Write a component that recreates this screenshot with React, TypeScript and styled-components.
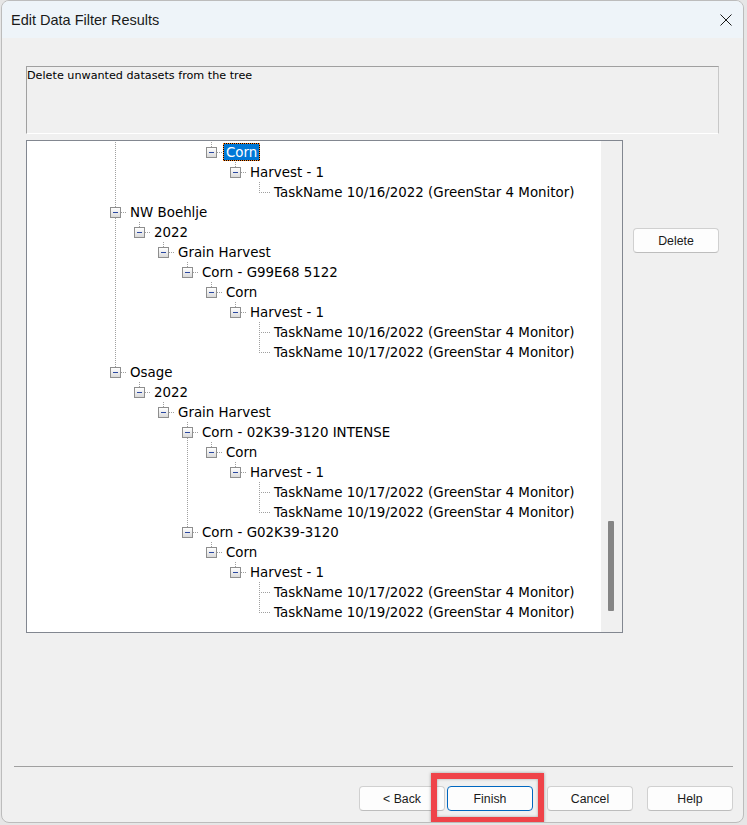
import React from "react";
import styled, { createGlobalStyle, css } from "styled-components";

const GlobalStyle = createGlobalStyle`
  html, body {
    margin: 0;
    padding: 0;
    background: #e6e6e6;
  }
  body {
    width: 747px;
    height: 825px;
    overflow: hidden;
  }
  #root {
    padding-left: 1px;
  }
`;

const UI_FONT = `"Liberation Sans", Arial, sans-serif`;
const TREE_FONT = `"DejaVu Sans", Verdana, sans-serif`;
const DOT = "#a0a0a0";

const Window = styled.div`
  width: 743px;
  height: 823px;
  box-sizing: border-box;
  border: 1px solid #bcbcbc;
  border-radius: 8px;
  overflow: hidden;
  background: #f0f0f0;
  display: flex;
  flex-direction: column;
  font-family: ${UI_FONT};
`;

const TitleBar = styled.div`
  flex: none;
  height: 37px;
  background: #eef4f9;
  display: flex;
  align-items: center;
  justify-content: space-between;
  padding: 0 11px 0 9px;
`;

const Title = styled.span`
  font-size: 14.5px;
  color: #1a1a1a;
`;

const CloseGlyph = styled.svg`
  display: block;
  width: 12px;
  height: 12px;
`;

const Body = styled.div`
  flex: 1;
  min-height: 0;
  display: flex;
  flex-direction: column;
  padding: 28px 24px 0;
`;

const Intro = styled.div`
  flex: none;
  height: 68px;
  box-sizing: border-box;
  border: 1px solid;
  border-color: #a0a0a0 #c8c8c8 #ffffff #a0a0a0;
  padding: 2px 0;
  font: 11.2px/13px ${TREE_FONT};
  color: #000;
`;

const Main = styled.div`
  flex: none;
  display: flex;
  gap: 10px;
  margin-top: 6px;
`;

const TreeBox = styled.div`
  width: 597px;
  height: 493px;
  box-sizing: border-box;
  border: 1px solid #828790;
  background: #fff;
  display: flex;
`;

const Viewport = styled.div`
  flex: 1;
  overflow: hidden;
  padding: 1px 0 0 4px;
`;

const Track = styled.div`
  flex: none;
  width: 21px;
  background: #f0f0f0;
  display: flex;
  flex-direction: column;
  padding-left: 7px;
  box-sizing: border-box;
`;

const Thumb = styled.div<{ $top: number; $height: number }>`
  width: 6px;
  margin-top: ${(p) => p.$top}px;
  height: ${(p) => p.$height}px;
  background: #858585;
  border-radius: 1px;
`;

const Side = styled.div`
  width: 86px;
  padding-top: 88px;
`;

const Spacer = styled.div`
  flex: 1;
`;

const Footer = styled.div`
  flex: none;
  padding: 0 10px 11px 12px;
`;

const Separator = styled.div`
  height: 1px;
  background: #a0a0a0;
`;

const ButtonRow = styled.div`
  margin-top: 19px;
  display: flex;
  justify-content: flex-end;
  gap: 14px;
`;

const NavGroup = styled.div`
  display: flex;
  gap: 2px;
`;

const Button = styled.button<{ $default?: boolean }>`
  width: 86px;
  height: 25px;
  box-sizing: border-box;
  padding: 0;
  border-radius: 4px;
  border: 1px solid #d0d0d0;
  border-bottom-color: #bdbdbd;
  background: #fdfdfd;
  font: 12.3px ${UI_FONT};
  color: #1a1a1a;
  ${(p) =>
    p.$default &&
    css`
      border-color: #0067c0;
    `}
`;

const Highlighted = styled.div`
  position: relative;
  display: flex;
`;

const Callout = styled.div`
  position: absolute;
  left: -16px;
  right: -11px;
  top: -13px;
  bottom: -12px;
  border: 6px solid #ef4349;
  box-shadow: 0 0 3px rgba(0, 0, 0, 0.35), inset 0 0 3px rgba(0, 0, 0, 0.3);
  pointer-events: none;
`;

/* ---------- tree ---------- */

const Row = styled.div`
  display: flex;
  height: 20px;
  white-space: nowrap;
`;

const Guide = styled.span<{ $line: boolean }>`
  flex: none;
  width: 24px;
  height: 20px;
  ${(p) =>
    p.$line &&
    css`
      background-image: linear-gradient(to bottom, ${DOT} 50%, transparent 50%);
      background-size: 1px 2px;
      background-repeat: repeat-y;
      background-position: 12px 0;
    `}
`;

const NodeCell = styled.span<{ $last: boolean }>`
  flex: none;
  position: relative;
  width: 24px;
  height: 20px;
  display: flex;
  align-items: flex-start;

  &::before {
    content: "";
    position: absolute;
    left: 12px;
    top: 0;
    width: 1px;
    height: ${(p) => (p.$last ? "11px" : "20px")};
    background-image: linear-gradient(to bottom, ${DOT} 50%, transparent 50%);
    background-size: 1px 2px;
  }

  &::after {
    content: "";
    position: absolute;
    left: 12px;
    top: 10px;
    width: 12px;
    height: 1px;
    background-image: linear-gradient(to right, ${DOT} 50%, transparent 50%);
    background-size: 2px 1px;
  }
`;

const Expander = styled.span`
  position: relative;
  z-index: 1;
  margin: 5px 0 0 7px;
  width: 11px;
  height: 11px;
  box-sizing: border-box;
  border: 1px solid #8e8e8e;
  background: linear-gradient(#ffffff, #d9d9d9);
  display: flex;
  align-items: center;
  justify-content: center;
`;

const Minus = styled.span`
  width: 5px;
  height: 1px;
  background: #2b48a0;
`;

const Label = styled.span<{ $selected?: boolean }>`
  margin-top: 1px;
  height: 18px;
  box-sizing: border-box;
  padding: 1px 2px 0;
  border: 1px solid transparent;
  font: 13.4px/16px ${TREE_FONT};
  color: #000;
  ${(p) =>
    p.$selected &&
    css`
      background: #0078d7;
      color: #fff;
      border-color: #000;
      outline: 1px dotted #ff8728;
      outline-offset: -1px;
    `}
`;

type Node = {
  depth: number;
  label: string;
  branch?: boolean;
  last?: boolean;
  lines?: number[];
  selected?: boolean;
};

const TASK16 = "TaskName 10/16/2022 (GreenStar 4 Monitor)";
const TASK17 = "TaskName 10/17/2022 (GreenStar 4 Monitor)";
const TASK19 = "TaskName 10/19/2022 (GreenStar 4 Monitor)";

const rows: Node[] = [
  { depth: 7, label: "Corn", branch: true, last: true, lines: [3], selected: true },
  { depth: 8, label: "Harvest - 1", branch: true, last: true, lines: [3] },
  { depth: 9, label: TASK16, last: true, lines: [3] },
  { depth: 3, label: "NW Boehlje", branch: true, last: false },
  { depth: 4, label: "2022", branch: true, last: true, lines: [3] },
  { depth: 5, label: "Grain Harvest", branch: true, last: true, lines: [3] },
  { depth: 6, label: "Corn - G99E68 5122", branch: true, last: true, lines: [3] },
  { depth: 7, label: "Corn", branch: true, last: true, lines: [3] },
  { depth: 8, label: "Harvest - 1", branch: true, last: true, lines: [3] },
  { depth: 9, label: TASK16, last: false, lines: [3] },
  { depth: 9, label: TASK17, last: true, lines: [3] },
  { depth: 3, label: "Osage", branch: true, last: true },
  { depth: 4, label: "2022", branch: true, last: true },
  { depth: 5, label: "Grain Harvest", branch: true, last: true },
  { depth: 6, label: "Corn - 02K39-3120 INTENSE", branch: true, last: false },
  { depth: 7, label: "Corn", branch: true, last: true, lines: [6] },
  { depth: 8, label: "Harvest - 1", branch: true, last: true, lines: [6] },
  { depth: 9, label: TASK17, last: false, lines: [6] },
  { depth: 9, label: TASK19, last: true, lines: [6] },
  { depth: 6, label: "Corn - G02K39-3120", branch: true, last: true },
  { depth: 7, label: "Corn", branch: true, last: true },
  { depth: 8, label: "Harvest - 1", branch: true, last: true },
  { depth: 9, label: TASK17, last: false },
  { depth: 9, label: TASK19, last: true },
];

function TreeRow({ node }: { node: Node }) {
  const guides = Array.from({ length: node.depth }, (_, i) => (node.lines ?? []).includes(i));
  return (
    <Row>
      {guides.map((line, i) => (
        <Guide key={i} $line={line} />
      ))}
      <NodeCell $last={!!node.last}>
        {node.branch && (
          <Expander>
            <Minus />
          </Expander>
        )}
      </NodeCell>
      <Label $selected={node.selected}>{node.label}</Label>
    </Row>
  );
}

export default function App() {
  return (
    <>
      <GlobalStyle />
      <Window>
        <TitleBar>
          <Title>Edit Data Filter Results</Title>
          <CloseGlyph viewBox="0 0 12 12">
            <path d="M0.5 0.5 L11.5 11.5 M11.5 0.5 L0.5 11.5" stroke="#1a1a1a" strokeWidth="1" fill="none" />
          </CloseGlyph>
        </TitleBar>
        <Body>
          <Intro>Delete unwanted datasets from the tree</Intro>
          <Main>
            <TreeBox>
              <Viewport>
                {rows.map((n, i) => (
                  <TreeRow key={i} node={n} />
                ))}
              </Viewport>
              <Track>
                <Thumb $top={380} $height={90} />
              </Track>
            </TreeBox>
            <Side>
              <Button>Delete</Button>
            </Side>
          </Main>
          <Spacer />
        </Body>
        <Footer>
          <Separator />
          <ButtonRow>
            <NavGroup>
              <Button>&lt; Back</Button>
              <Highlighted>
                <Button $default>Finish</Button>
                <Callout />
              </Highlighted>
            </NavGroup>
            <Button>Cancel</Button>
            <Button>Help</Button>
          </ButtonRow>
        </Footer>
      </Window>
    </>
  );
}
